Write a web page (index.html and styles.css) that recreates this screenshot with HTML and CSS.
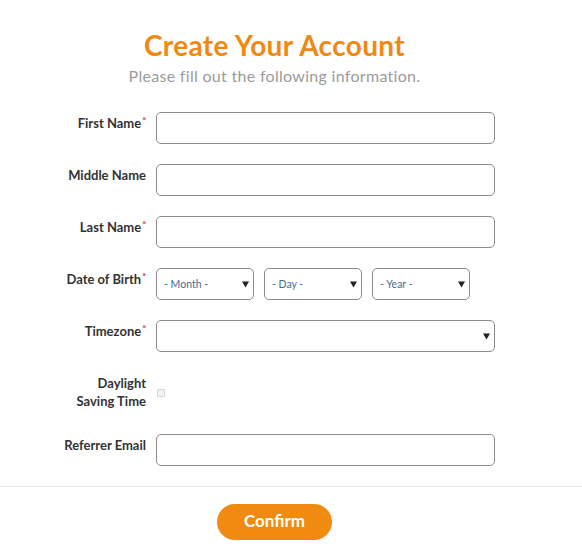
FILE: index.html
```html
<!DOCTYPE html>
<html lang="en">
<head>
<meta charset="utf-8">
<title>Create Your Account</title>
<link rel="stylesheet" href="styles.css">
</head>
<body>
<div class="page">
  <header class="head">
    <h1 class="title">Create Your Account</h1>
    <p class="subtitle">Please fill out the following information.</p>
  </header>
  <form class="form">
    <div class="row">
      <label class="label">First Name<span class="req">*</span></label>
      <input class="field" type="text">
    </div>
    <div class="row">
      <label class="label">Middle Name</label>
      <input class="field" type="text">
    </div>
    <div class="row">
      <label class="label">Last Name<span class="req">*</span></label>
      <input class="field" type="text">
    </div>
    <div class="row">
      <label class="label">Date of Birth<span class="req">*</span></label>
      <div class="dob">
        <div class="sel sel-small"><select><option>- Month -</option></select><svg class="arrow" viewBox="0 0 7 7"><path d="M0 0.5H7L3.5 6.5Z"/></svg></div>
        <div class="sel sel-small"><select><option>- Day -</option></select><svg class="arrow" viewBox="0 0 7 7"><path d="M0 0.5H7L3.5 6.5Z"/></svg></div>
        <div class="sel sel-small"><select><option>- Year -</option></select><svg class="arrow" viewBox="0 0 7 7"><path d="M0 0.5H7L3.5 6.5Z"/></svg></div>
      </div>
    </div>
    <div class="row">
      <label class="label">Timezone<span class="req">*</span></label>
      <div class="sel sel-wide"><select><option></option></select><svg class="arrow" viewBox="0 0 7 7"><path d="M0 0.5H7L3.5 6.5Z"/></svg></div>
    </div>
    <div class="row row-check">
      <label class="label">Daylight<br>Saving Time</label>
      <input class="check" type="checkbox">
    </div>
    <div class="row">
      <label class="label">Referrer Email</label>
      <input class="field" type="email">
    </div>
  </form>
  <div class="divider"></div>
  <div class="actions">
    <button class="confirm" type="button">Confirm</button>
  </div>
</div>
</body>
</html>
```
FILE: styles.css
```css
* { box-sizing: border-box; }
html, body { margin: 0; padding: 0; background: #fff; }
body { font-family: "Lato", "Open Sans", sans-serif; color: #333; }

.page { width: 582px; }

.head { width: 549px; text-align: center; padding-top: 29px; }
.title {
  margin: 0;
  font-size: 28px;
  line-height: 32px;
  font-weight: 700;
  letter-spacing: 0.35px;
  color: #ef8912;
}
.subtitle {
  margin: 5px 0 0;
  font-size: 16px;
  line-height: 20px;
  letter-spacing: 0.3px;
  color: #9b9b9b;
  font-weight: 400;
}

.form { margin-top: 26px; display: flex; flex-direction: column; gap: 20px; }
.row { display: flex; align-items: flex-start; gap: 10px; }
.label {
  width: 146px;
  flex: none;
  text-align: right;
  font-size: 13px;
  line-height: 18px;
  font-weight: 700;
  color: #333;
  padding: 2px 0 4px;
}
.req { color: #e02424; font-size: 9px; vertical-align: top; position: relative; top: -2px; margin-left: 1px; }

.field {
  width: 339px;
  height: 32px;
  border: 1px solid #8c8c8c;
  border-radius: 5px;
  background: #fff;
  font: inherit;
  padding: 0 8px;
}

.dob { display: flex; gap: 10px; }
.sel { position: relative; height: 32px; }
.sel-small { width: 98px; }
.sel-wide { width: 339px; }
.sel select {
  -webkit-appearance: none;
  appearance: none;
  width: 100%;
  height: 32px;
  border: 1px solid #8c8c8c;
  border-radius: 5px;
  background: #fff;
  font-family: "Lato", sans-serif;
  font-size: 10.5px;
  color: #4a6a92;
  padding: 0 0 0 7px;
}
.arrow {
  position: absolute;
  right: 5px;
  top: 13px;
  width: 7px;
  height: 7px;
  fill: #222;
  pointer-events: none;
}

.check {
  -webkit-appearance: none;
  appearance: none;
  width: 8px;
  height: 8px;
  margin: 0 0 0 1px;
  border: 1px solid #d4d4d4;
  border-radius: 1px;
  background: #f2f2f2;
  align-self: center;
}

.divider { margin-top: 20px; height: 1px; background: #e8e8e8; width: 582px; }
.actions { width: 549px; text-align: center; padding-top: 17px; }
.confirm {
  width: 115px;
  height: 36px;
  border: none;
  border-radius: 18px;
  background: #f08a10;
  color: #fff;
  font-family: "Lato", sans-serif;
  font-size: 17px;
  line-height: 20px;
  font-weight: 700;
  padding: 0 0 2px;
}
```
